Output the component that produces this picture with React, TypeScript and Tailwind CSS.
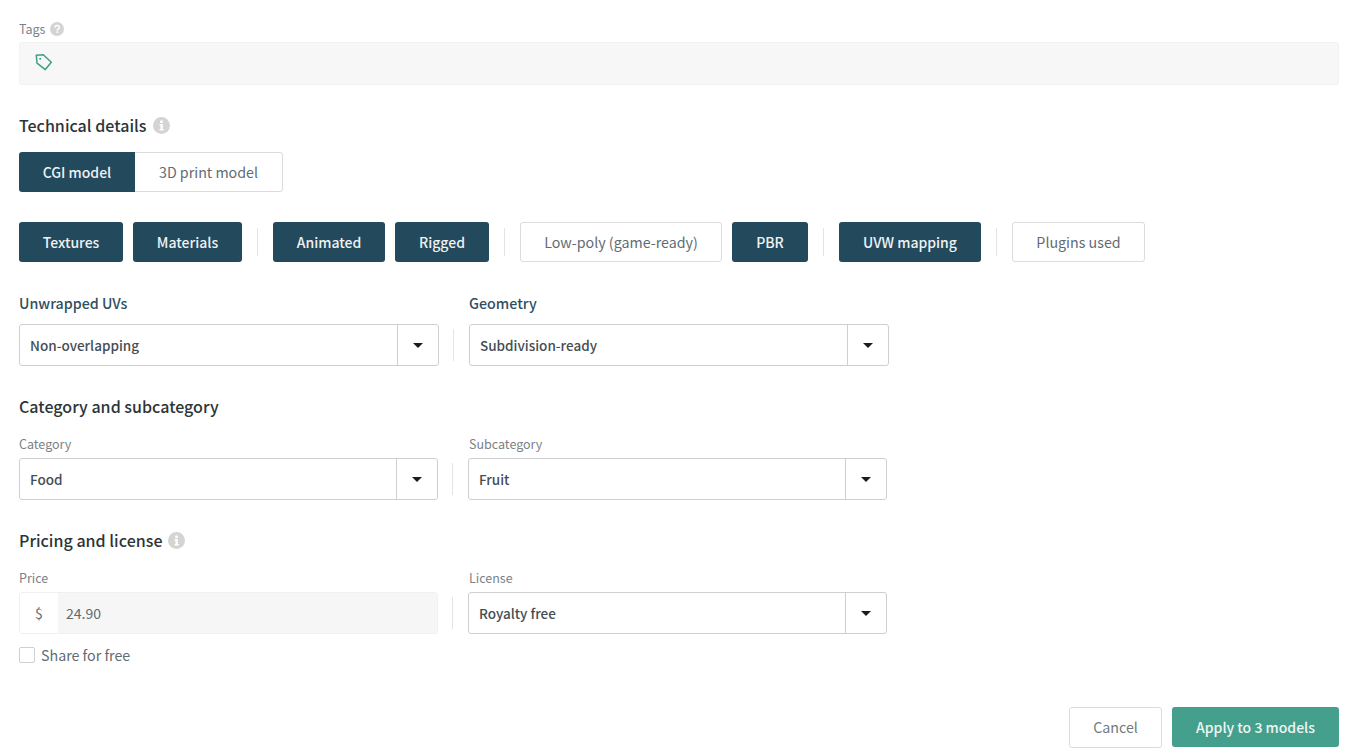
import React from 'react'

const font = { fontFamily: '"Noto Sans CJK SC", "Noto Sans", sans-serif' }

const Divider = ({ className = '' }: { className?: string }) => (
  <div className={`w-px h-[28px] bg-[#e4e4e4] shrink-0 ${className}`} />
)

const Chip = ({ label, active, className = '' }: { label: string; active?: boolean; className?: string }) => (
  <div
    className={`h-10 flex items-center justify-center rounded-[3px] shrink-0 ${
      active
        ? 'bg-[#23495c] text-[#eef2f4] font-medium text-[14px]'
        : 'bg-white border border-[#dcdcdc] text-[#5f6c73] text-[14.25px]'
    } ${className}`}
  >
    {label}
  </div>
)

const Select = ({ value, width }: { value: string; width: string }) => (
  <div className={`h-[42px] flex border border-[#cfcfcf] rounded-[3px] bg-white shrink-0 ${width}`}>
    <div className="flex-1 flex items-center pl-[10px] text-[13.5px] font-medium text-[#444e54]">{value}</div>
    <div className="w-[41px] flex items-center justify-center border-l border-[#cfcfcf]">
      <div className="w-0 h-0 border-x-[5px] border-x-transparent border-t-[5px] border-t-[#1c1c1c]" />
    </div>
  </div>
)

const InfoIcon = () => (
  <svg width="17" height="17" viewBox="0 0 17 17" className="shrink-0">
    <circle cx="8.5" cy="8.5" r="8.5" fill="#d4d4d4" />
    <rect x="7.2" y="3.4" width="2.6" height="2.5" rx="0.5" fill="#fff" />
    <path d="M6.6 7.1h3.2v4.8h1v1.5H6.5v-1.5h1v-3.300h-.9z" fill="#fff" />
  </svg>
)

const HelpIcon = () => (
  <svg width="14" height="14" viewBox="0 0 14 14" className="shrink-0">
    <circle cx="7" cy="7" r="7" fill="#d4d4d4" />
    <path d="M4.9 5.5C5 4.300 5.900 3.600 7.100 3.600c1.200 0 2.100.7 2.100 1.800 0 1.600-1.900 1.500-1.900 3" fill="none" stroke="#fff" strokeWidth="1.500" />
    <rect x="6.400" y="9.300" width="1.700" height="1.600" fill="#fff" />
  </svg>
)

const SectionTitle = ({ children }: { children: React.ReactNode }) => (
  <h2 className="text-[16px] leading-6 font-medium tracking-[0.02px] text-[#2d3438]">{children}</h2>
)

const FieldLabel = ({ children, className = '' }: { children: React.ReactNode; className?: string }) => (
  <div className={`text-[12.5px] leading-[20px] text-[#7b8287] ${className}`}>{children}</div>
)

export default function App() {
  return (
    <div style={font} className="w-[1348px] h-[755px] overflow-hidden bg-white pl-[19px] pr-[9px] relative">
      <div className="pt-[20px] flex items-center gap-[5px] h-[42px] pb-[4px]">
        <span className="text-[12.5px] text-[#7b8287]">Tags</span>
        <HelpIcon />
      </div>
      <div className="h-[43px] bg-[#f7f7f7] border border-[#f2f2f2] rounded-[3px] flex items-center pl-[14px]">
        <svg width="19" height="19" viewBox="0 0 19 19" fill="none" stroke="#3f9e88" strokeWidth="1.500" strokeLinejoin="round" className="-mt-[2px]">
          <path d="M2.300 2.200 9.300 1.800 17.300 9.300 11.300 16.600 3 10.100z" />
          <circle cx="6.200" cy="5.700" r="1" fill="#3f9e88" stroke="none" />
        </svg>
      </div>

      <div className="mt-[28px] flex items-center gap-[6px]">
        <SectionTitle>Technical details</SectionTitle>
        <InfoIcon />
      </div>

      <div className="mt-[15px] flex">
        <Chip label="CGI model" active className="w-[116px] rounded-r-none" />
        <Chip label="3D print model" className="w-[148px] rounded-l-none border-l-0" />
      </div>

      <div className="mt-[30px] flex items-center">
        <Chip label="Textures" active className="w-[104px]" />
        <Chip label="Materials" active className="w-[109px] ml-[10px]" />
        <Divider className="mx-[15px]" />
        <Chip label="Animated" active className="w-[112px]" />
        <Chip label="Rigged" active className="w-[94px] ml-[10px]" />
        <Divider className="mx-[15px]" />
        <Chip label="Low-poly (game-ready)" className="w-[202px]" />
        <Chip label="PBR" active className="w-[76px] ml-[10px]" />
        <Divider className="mx-[15px]" />
        <Chip label="UVW mapping" active className="w-[142px]" />
        <Divider className="mx-[15px]" />
        <Chip label="Plugins used" className="w-[133px]" />
      </div>

      <div className="mt-[31px] flex">
        <div className="w-[450px] text-[14.25px] leading-[20px] font-medium text-[#2f4f60]">Unwrapped UVs</div>
        <div className="text-[14.25px] leading-[20px] font-medium text-[#2f4f60]">Geometry</div>
      </div>
      <div className="mt-[11px] flex items-center">
        <Select value="Non-overlapping" width="w-[420px]" />
        <Divider className="mx-[14px] h-[32px]" />
        <Select value="Subdivision-ready" width="w-[420px] ml-px" />
      </div>

      <div className="mt-[28px]">
        <SectionTitle>Category and subcategory</SectionTitle>
      </div>
      <div className="mt-[16px] flex">
        <FieldLabel className="w-[450px]">Category</FieldLabel>
        <FieldLabel>Subcategory</FieldLabel>
      </div>
      <div className="mt-[4px] flex items-center">
        <Select value="Food" width="w-[419px]" />
        <Divider className="mx-[14px] h-[32px]" />
        <Select value="Fruit" width="w-[419px] ml-px" />
      </div>

      <div className="mt-[28px] flex items-center gap-[6px]">
        <SectionTitle>Pricing and license</SectionTitle>
        <InfoIcon />
      </div>
      <div className="mt-[16px] flex">
        <FieldLabel className="w-[450px]">Price</FieldLabel>
        <FieldLabel>License</FieldLabel>
      </div>
      <div className="mt-[4px] flex items-center">
        <div className="w-[419px] h-[42px] flex border border-[#f0f0f0] rounded-[3px] shrink-0">
          <div className="w-[38px] flex items-center justify-center text-[14px] text-[#5f6c73]">$</div>
          <div className="flex-1 bg-[#f6f6f6] flex items-center pl-[8px] text-[14px] text-[#5f6c73]">24.90</div>
        </div>
        <Divider className="mx-[14px] h-[32px]" />
        <Select value="Royalty free" width="w-[419px] ml-px" />
      </div>

      <div className="mt-[12px] flex items-center gap-[6px]">
        <div className="w-4 h-4 border border-[#cfcfcf] rounded-[2px] bg-white" />
        <span className="text-[14.25px] leading-[18px] text-[#5f6c73]">Share for free</span>
      </div>

      <div className="mt-[43px] flex justify-end gap-[10px]">
        <div className="w-[93px] h-[41px] flex items-center justify-center border border-[#dcdcdc] rounded-[3px] pb-[1px] text-[14.25px] text-[#6f7a80]">
          Cancel
        </div>
        <div className="w-[167px] h-10 flex items-center justify-center bg-[#44a08c] rounded-[3px] text-[14px] font-medium text-[#eef6f4]">
          Apply to 3 models
        </div>
      </div>
    </div>
  )
}
